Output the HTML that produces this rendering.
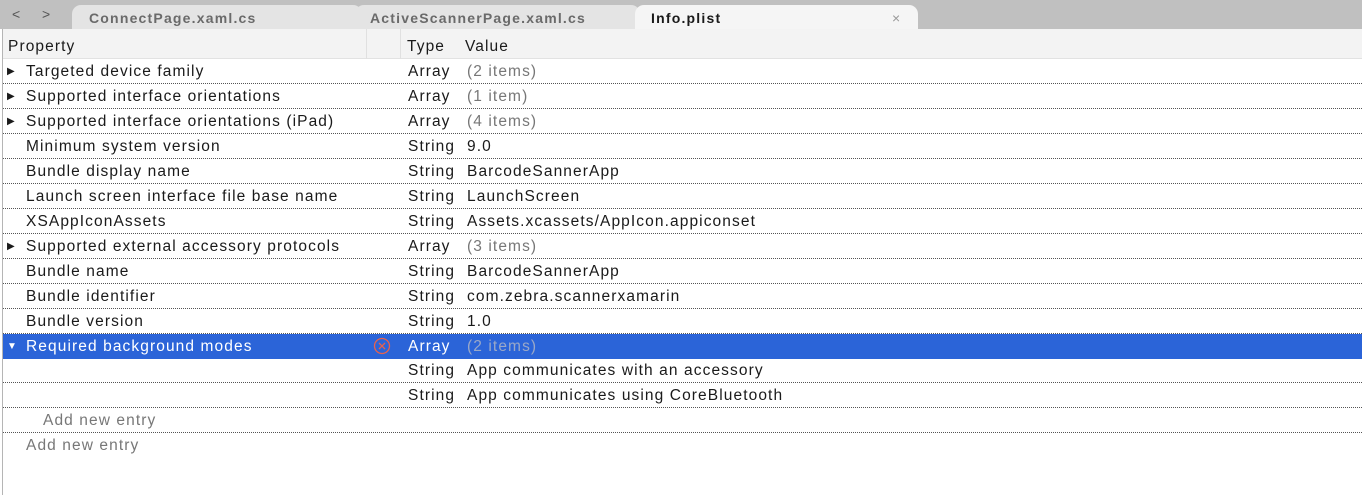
<!DOCTYPE html>
<html><head><style>
*{margin:0;padding:0;box-sizing:border-box}
body{width:1362px;height:495px;background:#fff;font-family:"Liberation Sans",sans-serif;font-size:15.5px;color:#1a1a1a;position:relative;overflow:hidden;letter-spacing:1.1px}
.bar{position:absolute;left:0;top:0;width:1362px;height:29px;background:#c0c0c0}
.tab{position:absolute;top:5px;height:24px;background:#e4e4e4;border-radius:9px 9px 0 0;font-weight:bold;color:#6a6a6a;font-size:14px;letter-spacing:1.2px;line-height:26px}
.tab.a{background:#f5f5f5;color:#1a1a1a}
.hdr{position:absolute;left:2px;top:29px;width:1360px;height:30px;background:#f3f3f3;border-bottom:1px solid #e2e2e2}
.lb{position:absolute;left:2px;top:29px;width:1px;height:466px;background:#b5b5b5}
.row{position:absolute;left:3px;width:1359px;height:25px;border-bottom:1px dotted #555;line-height:26px}
.row span{position:absolute;top:0;white-space:nowrap}
.g{color:#777}
.sel{background:#2b64d8;color:#fff;border-bottom:none}
.tri{font-size:10px;letter-spacing:0}
</style></head><body>
<div class="bar"></div>
<div style="position:absolute;left:12px;top:6px;color:#555;font-size:14px">&lt;</div>
<div style="position:absolute;left:42px;top:6px;color:#555;font-size:14px">&gt;</div>
<div class="tab" style="left:72px;width:290px;padding-left:17px">ConnectPage.xaml.cs</div>
<div class="tab" style="left:355px;width:285px;padding-left:15px">ActiveScannerPage.xaml.cs</div>
<div class="tab a" style="left:635px;width:283px;padding-left:16px">Info.plist<span style="position:absolute;left:257px;color:#999;font-weight:normal">×</span></div>
<div class="hdr">
<span style="position:absolute;left:6px;top:9px">Property</span>
<span style="position:absolute;left:405px;top:9px">Type</span>
<span style="position:absolute;left:463px;top:9px">Value</span>
<div style="position:absolute;left:364px;top:0;width:1px;height:30px;background:#e0e0e0"></div>
<div style="position:absolute;left:398px;top:0;width:1px;height:30px;background:#e0e0e0"></div>
</div>
<div class="lb"></div>

<div class="row" style="top:59px"><span class="tri" style="left:4px">▶</span><span style="left:23px">Targeted device family</span><span style="left:405px">Array</span><span class="g" style="left:464px">(2 items)</span></div>
<div class="row" style="top:84px"><span class="tri" style="left:4px">▶</span><span style="left:23px">Supported interface orientations</span><span style="left:405px">Array</span><span class="g" style="left:464px">(1 item)</span></div>
<div class="row" style="top:109px"><span class="tri" style="left:4px">▶</span><span style="left:23px">Supported interface orientations (iPad)</span><span style="left:405px">Array</span><span class="g" style="left:464px">(4 items)</span></div>
<div class="row" style="top:134px"><span style="left:23px">Minimum system version</span><span style="left:405px">String</span><span style="left:464px">9.0</span></div>
<div class="row" style="top:159px"><span style="left:23px">Bundle display name</span><span style="left:405px">String</span><span style="left:464px">BarcodeSannerApp</span></div>
<div class="row" style="top:184px"><span style="left:23px">Launch screen interface file base name</span><span style="left:405px">String</span><span style="left:464px">LaunchScreen</span></div>
<div class="row" style="top:209px"><span style="left:23px">XSAppIconAssets</span><span style="left:405px">String</span><span style="left:464px">Assets.xcassets/AppIcon.appiconset</span></div>
<div class="row" style="top:234px"><span class="tri" style="left:4px">▶</span><span style="left:23px">Supported external accessory protocols</span><span style="left:405px">Array</span><span class="g" style="left:464px">(3 items)</span></div>
<div class="row" style="top:259px"><span style="left:23px">Bundle name</span><span style="left:405px">String</span><span style="left:464px">BarcodeSannerApp</span></div>
<div class="row" style="top:284px"><span style="left:23px">Bundle identifier</span><span style="left:405px">String</span><span style="left:464px">com.zebra.scannerxamarin</span></div>
<div class="row" style="top:309px"><span style="left:23px">Bundle version</span><span style="left:405px">String</span><span style="left:464px">1.0</span></div>
<div class="row sel" style="top:334px"><span class="tri" style="left:4px">▼</span><span style="left:23px">Required background modes</span>
<svg style="position:absolute;left:370px;top:3px" width="18" height="18"><circle cx="9" cy="9" r="7.5" fill="none" stroke="#e8614d" stroke-width="1.3"/><path d="M6 6L12 12M12 6L6 12" stroke="#e8614d" stroke-width="1.3"/></svg>
<span style="left:405px">Array</span><span style="left:464px;color:#9aa8c8">(2 items)</span></div>
<div class="row" style="top:358px"><span style="left:405px">String</span><span style="left:464px">App communicates with an accessory</span></div>
<div class="row" style="top:383px"><span style="left:405px">String</span><span style="left:464px">App communicates using CoreBluetooth</span></div>
<div class="row" style="top:408px"><span class="g" style="left:40px">Add new entry</span></div>
<div class="row" style="top:433px;border-bottom:none"><span class="g" style="left:23px">Add new entry</span></div>
</body></html>
